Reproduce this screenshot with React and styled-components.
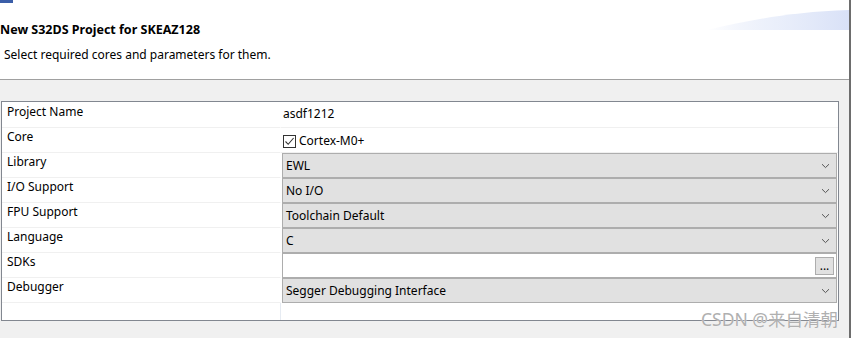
import React from 'react'
import styled, { createGlobalStyle } from 'styled-components'

const GlobalStyle = createGlobalStyle`
  html, body {
    margin: 0;
    padding: 0;
    background: #f0f0f0;
  }
  body {
    font-family: "Noto Sans", "Noto Sans CJK SC", sans-serif;
    font-size: 12px;
    color: #000;
  }
`

const Window = styled.div`
  position: relative;
  width: 851px;
  height: 338px;
  overflow: hidden;
  display: flex;
  flex-direction: column;
  border-right: 2px solid #6d6d6d;
  box-sizing: border-box;
`

const Header = styled.header`
  position: relative;
  height: 80px;
  box-sizing: border-box;
  background: #fff;
  border-bottom: 1px solid #a0a0a0;
  display: flex;
  flex-direction: column;
`

const TitleSliver = styled.div`
  height: 3px;
  display: flex;
  align-items: flex-start;
`

const SliverIcon = styled.span`
  width: 13px;
  height: 3px;
  background: #3b5ea8;
`

const Title = styled.h1`
  margin: 19px 0 0 0;
  font-size: 12.5px;
  font-weight: 700;
  line-height: 16px;
`

const Subtitle = styled.p`
  margin: 9px 0 0 4px;
  font-size: 12px;
  line-height: 16px;
`

const Banner = styled.svg`
  position: absolute;
  right: 0;
  top: 9px;
`

const Body = styled.main`
  flex: 1;
  padding: 21px 0 0 1px;
`

const Panel = styled.section`
  width: 838px;
  height: 220px;
  box-sizing: border-box;
  border: 1px solid #828790;
  background: #fff;
  padding-top: 1px;
  display: flex;
  flex-direction: column;
`

const Row = styled.div`
  display: grid;
  grid-template-columns: 279px 1fr;
  height: 25px;
  flex: ${p => (p.$fill ? 1 : 'none')};
`

const Label = styled.div`
  box-sizing: border-box;
  padding: 0 0 0 5px;
  line-height: 17px;
  border-bottom: ${p => (p.$last ? 'none' : '1px solid #f0f0f0')};
  border-right: 1px solid ${p => (p.$last ? '#e6ebf2' : '#fff')};
  white-space: nowrap;
`

const Value = styled.div`
  box-sizing: border-box;
  display: flex;
  align-items: center;
  padding: ${p => (p.$control ? '0 1px 0 1px' : '0 0 0 2px')};
  border-bottom: ${p => (p.$control || p.$last ? 'none' : '1px solid #f0f0f0')};
  line-height: 16px;
`

const PlainText = styled.span`
  margin-top: -3px;
`

const Select = styled.div`
  flex: 1;
  height: 25px;
  box-sizing: border-box;
  background: #e1e1e1;
  border: 1px solid #adadad;
  display: flex;
  align-items: center;
  justify-content: space-between;
  padding: 1px 6px 0 3px;
`

const TextField = styled.div`
  flex: 1;
  height: 25px;
  box-sizing: border-box;
  background: #fff;
  border: 1px solid #adadad;
  display: flex;
  align-items: center;
  justify-content: flex-end;
  padding-right: 2px;
`

const BrowseButton = styled.button`
  width: 19px;
  height: 18px;
  box-sizing: border-box;
  padding: 0 0 3px 0;
  background: #e1e1e1;
  border: 1px solid #adadad;
  font-family: inherit;
  font-size: 12px;
  line-height: 10px;
  display: flex;
  align-items: flex-end;
  justify-content: center;
  color: #000;
`

const CheckLabel = styled.label`
  display: flex;
  align-items: center;
  gap: 3px;
  margin-top: 2px;
`

const CheckBox = styled.span`
  width: 13px;
  height: 13px;
  box-sizing: border-box;
  border: 1px solid #333;
  background: #fff;
  display: flex;
  align-items: center;
  justify-content: center;
`

const Watermark = styled.div`
  position: absolute;
  left: 701px;
  top: 309px;
  font-family: "Noto Sans", "Noto Sans CJK SC", sans-serif;
  font-size: 17.5px;
  line-height: 20px;
  color: #b0b0b0;
  white-space: nowrap;
  text-shadow: 0 0 1px #fff;
`

const Chevron = () => (
  <svg width="9" height="6" viewBox="0 0 9 6">
    <path d="M1 1.2 L4.5 4.6 L8 1.2" fill="none" stroke="#555" strokeWidth="1" />
  </svg>
)

const Tick = () => (
  <svg width="11" height="11" viewBox="0 0 11 11">
    <path d="M1.5 5.5 L4.2 8.3 L9.6 2" fill="none" stroke="#333" strokeWidth="1.1" />
  </svg>
)

const rows = [
  { label: 'Project Name', kind: 'text', value: 'asdf1212' },
  { label: 'Core', kind: 'check', value: 'Cortex-M0+' },
  { label: 'Library', kind: 'select', value: 'EWL' },
  { label: 'I/O Support', kind: 'select', value: 'No I/O' },
  { label: 'FPU Support', kind: 'select', value: 'Toolchain Default' },
  { label: 'Language', kind: 'select', value: 'C' },
  { label: 'SDKs', kind: 'browse', value: '' },
  { label: 'Debugger', kind: 'select', value: 'Segger Debugging Interface' },
]

const renderValue = row => {
  if (row.kind === 'select') {
    return (
      <Value $control>
        <Select>
          <span>{row.value}</span>
          <Chevron />
        </Select>
      </Value>
    )
  }
  if (row.kind === 'browse') {
    return (
      <Value $control>
        <TextField>
          <BrowseButton>...</BrowseButton>
        </TextField>
      </Value>
    )
  }
  if (row.kind === 'check') {
    return (
      <Value>
        <CheckLabel>
          <CheckBox>
            <Tick />
          </CheckBox>
          {row.value}
        </CheckLabel>
      </Value>
    )
  }
  return (
    <Value>
      <PlainText>{row.value}</PlainText>
    </Value>
  )
}

export default function App() {
  return (
    <Window>
      <GlobalStyle />
      <Header>
        <TitleSliver>
          <SliverIcon />
        </TitleSliver>
        <Title>New S32DS Project for SKEAZ128</Title>
        <Subtitle>Select required cores and parameters for them.</Subtitle>
        <Banner width="142" height="21" viewBox="0 0 142 21">
          <defs>
            <linearGradient id="bannerFade" x1="0" x2="1" y1="0" y2="0">
              <stop offset="0" stopColor="#dbe3f7" stopOpacity="0" />
              <stop offset="0.45" stopColor="#e6ecfa" stopOpacity="0.8" />
              <stop offset="1" stopColor="#d9e1f7" />
            </linearGradient>
          </defs>
          <path d="M0 21 C40 12 80 3 142 1 L142 21 Z" fill="url(#bannerFade)" />
        </Banner>
      </Header>
      <Body>
        <Panel>
          {rows.map(row => (
            <Row key={row.label}>
              <Label>{row.label}</Label>
              {renderValue(row)}
            </Row>
          ))}
          <Row $fill>
            <Label $last />
            <Value $last />
          </Row>
        </Panel>
      </Body>
      <Watermark>CSDN @来自清朝</Watermark>
    </Window>
  )
}
